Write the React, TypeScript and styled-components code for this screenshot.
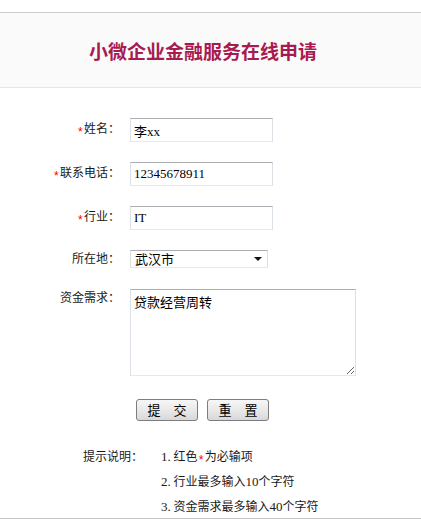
import React from "react";
import styled, { createGlobalStyle } from "styled-components";

const Global = createGlobalStyle`
  html, body { margin: 0; padding: 0; background: #fff; }
  body {
    font-family: "Noto Sans CJK SC", "Liberation Sans", sans-serif;
    font-size: 12px;
    color: #1a1a1a;
  }
`;

const Page = styled.div`
  width: 421px;
  padding-top: 12px;
`;

const Header = styled.header`
  height: 74px;
  border-top: 1px solid #cdcdcd;
  border-bottom: 1px solid #e6e6e6;
  background: #fafafa;
  display: flex;
  align-items: center;
  justify-content: center;
`;

const Title = styled.h1`
  margin: 0 15px 0 0;
  font-size: 19px;
  font-weight: bold;
  color: #a81b50;
  line-height: 1;
`;

const Form = styled.form`
  padding-top: 30px;
  display: grid;
  grid-template-columns: 120px 1fr;
  column-gap: 10px;
  row-gap: 20px;
  align-items: start;
`;

const Label = styled.label<{ $offset?: number }>`
  text-align: right;
  font-size: 12px;
  line-height: 16px;
  padding-top: ${(p) => p.$offset ?? 1}px;
  white-space: nowrap;
`;

const Star = styled.span`
  color: #f00;
  font-family: "Liberation Mono", monospace;
  font-size: 12px;
  line-height: 0;
  vertical-align: -3px;
`;

const TextInput = styled.input`
  box-sizing: border-box;
  width: 143px;
  height: 24px;
  margin: 0;
  padding: 0 3px;
  border: 1px solid #dbdfe6;
  border-top-color: #abadb3;
  border-bottom-color: #e3e9ef;
  font-family: "Liberation Serif", "Noto Sans CJK SC", serif;
  font-size: 13px;
  color: #000;
  outline: none;
`;

const SelectWrap = styled.div`
  position: relative;
  width: 138px;
  height: 18px;
  &::after {
    content: "";
    position: absolute;
    right: 6px;
    top: 7px;
    border-left: 4px solid transparent;
    border-right: 4px solid transparent;
    border-top: 4px solid #111;
    pointer-events: none;
  }
`;

const Select = styled.select`
  appearance: none;
  -webkit-appearance: none;
  box-sizing: border-box;
  width: 138px;
  height: 18px;
  margin: 0;
  padding: 0 0 0 4px;
  border: 1px solid #dbdfe6;
  border-top-color: #abadb3;
  border-bottom-color: #e3e9ef;
  background: #fff;
  font-family: "Noto Sans CJK SC", sans-serif;
  font-size: 13px;
  line-height: 16px;
  color: #000;
  outline: none;
`;

const TextArea = styled.textarea`
  box-sizing: border-box;
  width: 226px;
  height: 87px;
  margin: 1px 0 0;
  padding: 3px 3px;
  border: 1px solid #dbdfe6;
  border-top-color: #abadb3;
  border-bottom-color: #e3e9ef;
  font-family: "Noto Sans CJK SC", sans-serif;
  font-size: 13px;
  line-height: 17px;
  color: #000;
  outline: none;
`;

const Buttons = styled.div`
  display: flex;
  gap: 9px;
  padding: 23px 0 0 136px;
`;

const Button = styled.button`
  box-sizing: border-box;
  width: 62px;
  height: 22px;
  margin: 0;
  padding: 0;
  border: 1px solid #7d7d7d;
  border-radius: 3px;
  background: linear-gradient(#f7f7f7, #e6e6e6 60%, #d8d8d8);
  font-family: "Noto Sans CJK SC", sans-serif;
  font-size: 13px;
  line-height: 20px;
  color: #000;
`;

const Hints = styled.div`
  display: grid;
  grid-template-columns: 78px 1fr;
  padding: 22px 0 0 83px;
  font-size: 12px;
`;

const HintHead = styled.span`
  height: 25px;
  line-height: 25px;
`;

const HintList = styled.ol`
  margin: 0;
  padding: 0;
  list-style: none;
`;

const HintItem = styled.li`
  height: 25px;
  line-height: 25px;
  white-space: nowrap;
`;

const Num = styled.span`
  font-family: "Liberation Serif", serif;
  font-size: 13px;
  line-height: 0;
`;

const Footer = styled.div`
  border-top: 1px solid #c4c4c4;
  height: 1px;
`;

export default function App() {
  return (
    <Page>
      <Global />
      <Header>
        <Title>小微企业金融服务在线申请</Title>
      </Header>
      <Form onSubmit={(e) => e.preventDefault()}>
        <Label $offset={2}>
          <Star>*</Star>姓名：
        </Label>
        <TextInput defaultValue="李xx" />
        <Label $offset={2}>
          <Star>*</Star>联系电话：
        </Label>
        <TextInput defaultValue="12345678911" />
        <Label $offset={2}>
          <Star>*</Star>行业：
        </Label>
        <TextInput defaultValue="IT" />
        <Label $offset={0}>所在地：</Label>
        <SelectWrap>
          <Select defaultValue="武汉市">
            <option>武汉市</option>
            <option>黄石市</option>
            <option>宜昌市</option>
          </Select>
        </SelectWrap>
        <Label $offset={1}>资金需求：</Label>
        <TextArea defaultValue="贷款经营周转" />
      </Form>
      <Buttons>
        <Button type="button">提　交</Button>
        <Button type="button">重　置</Button>
      </Buttons>
      <Hints>
        <HintHead>提示说明：</HintHead>
        <HintList>
          <HintItem>
            <Num>1.</Num> 红色<Star>*</Star>为必输项
          </HintItem>
          <HintItem>
            <Num>2.</Num> 行业最多输入<Num>10</Num>个字符
          </HintItem>
          <HintItem>
            <Num>3.</Num> 资金需求最多输入<Num>40</Num>个字符
          </HintItem>
        </HintList>
      </Hints>
      <Footer />
    </Page>
  );
}
